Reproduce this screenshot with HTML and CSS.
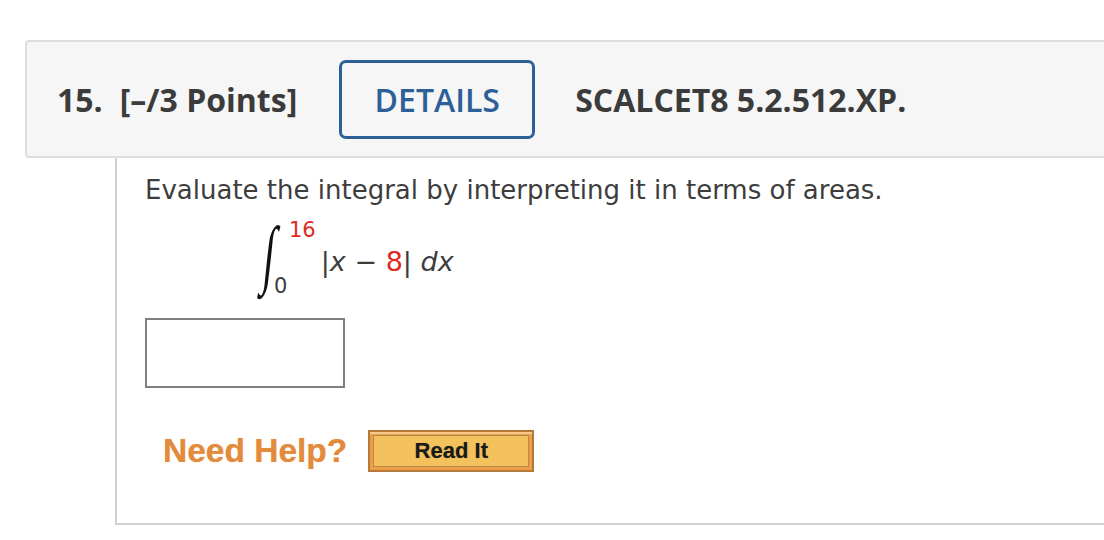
FILE: index.html
```html
<!DOCTYPE html>
<html>
<head>
<meta charset="utf-8">
<link rel="stylesheet" href="styles.css">
</head>
<body>
<div class="question">
  <div class="header">
    <span class="num">15.</span>
    <span class="points">[–/3 Points]</span>
    <button class="details">DETAILS</button>
    <span class="code">SCALCET8 5.2.512.XP.</span>
  </div>
  <div class="body">
    <p class="prompt">Evaluate the integral by interpreting it in terms of areas.</p>
    <div class="integral">
      <span class="int-sign">∫</span>
      <span class="limits"><span class="upper">16</span><span class="lower">0</span></span>
      <span class="expr">|<i>x</i> − <span class="red">8</span>| <i>dx</i></span>
    </div>
    <div class="answer"></div>
    <div class="help">
      <span class="need">Need Help?</span>
      <button class="readit"><span class="readit-inner">Read It</span></button>
    </div>
  </div>
</div>
</body>
</html>
```

FILE: styles.css
```css
html, body {
  margin: 0;
  padding: 0;
  background: #fff;
  overflow: hidden;
}
.question {
  width: 1200px;
  padding: 40px 0 0 25px;
}
.header {
  box-sizing: border-box;
  height: 118px;
  background: #f6f6f6;
  border: 2px solid #dddddd;
  border-radius: 4px;
  display: flex;
  align-items: center;
  padding-left: 30px;
  font-family: "Open Sans", sans-serif;
  font-weight: 700;
  color: #3b3b3b;
  font-size: 32px;
}
.num { margin-right: 17px; }
.points { margin-right: 42px; }
.details {
  box-sizing: border-box;
  width: 196px;
  height: 79px;
  border: 3px solid #2c6096;
  border-radius: 7px;
  background: #f6f6f6;
  color: #2c6096;
  font-family: "Open Sans", sans-serif;
  font-weight: 600;
  font-size: 32px;
  padding: 0;
  margin-right: 40px;
  margin-top: 1px;
}
.body {
  margin-left: 90px;
  height: 367px;
  border-left: 2px solid #cfcfcf;
  border-bottom: 2px solid #cfcfcf;
  padding-left: 28px;
  padding-top: 16px;
  box-sizing: border-box;
}
.prompt {
  margin: 0;
  font-family: "DejaVu Sans", Verdana, sans-serif;
  font-size: 26px;
  color: #3d3d3d;
  line-height: 32px;
}
.integral {
  display: flex;
  align-items: flex-start;
  margin-left: 112px;
  margin-top: 12px;
  height: 80px;
  font-family: "DejaVu Sans", Verdana, sans-serif;
  color: #3d3d3d;
}
.int-sign {
  font-family: "Liberation Serif", serif;
  font-size: 64px;
  line-height: 80px;
  height: 80px;
  color: #111;
  transform: translate(4px, -4px) scale(0.65, 1.18) skewX(-11deg);
  width: 17px;
  display: inline-block;
  overflow: visible;
}
.limits {
  display: flex;
  flex-direction: column;
  justify-content: space-between;
  height: 80px;
  font-size: 21px;
  line-height: 24px;
}
.upper { color: #e02a1f; margin-left: 15px; }
.lower { margin-left: 0; }
.expr {
  font-size: 27px;
  line-height: 32px;
  padding-top: 28px;
  margin-left: 5px;
}
.expr i { font-style: italic; }
.red { color: #e02a1f; }
.answer {
  margin-top: 20px;
  width: 200px;
  height: 70px;
  box-sizing: border-box;
  border: 2px solid #808080;
}
.help {
  display: flex;
  align-items: center;
  margin-top: 42px;
  margin-left: 18px;
}
.need {
  font-family: "Liberation Sans", Arial, sans-serif;
  font-weight: 700;
  font-size: 33.5px;
  color: #e38b3d;
  text-shadow: 0 0 1px rgba(227,139,61,0.6);
  margin-right: 21px;
}
.readit {
  box-sizing: border-box;
  width: 166px;
  height: 42px;
  padding: 3px;
  border: 2px solid #b57a3a;
  background: #ee9e48;
  box-shadow: inset 0 2px 0 #f7c98b;
  display: flex;
}
.readit-inner {
  flex: 1;
  display: flex;
  align-items: center;
  justify-content: center;
  border: 1px solid #b68a4a;
  background: #f4c25c;
  font-family: "Liberation Sans", Arial, sans-serif;
  font-weight: 700;
  font-size: 22px;
  color: #1a1a1a;
  text-shadow: 0 0 1px rgba(0,0,0,0.4);
}
```
